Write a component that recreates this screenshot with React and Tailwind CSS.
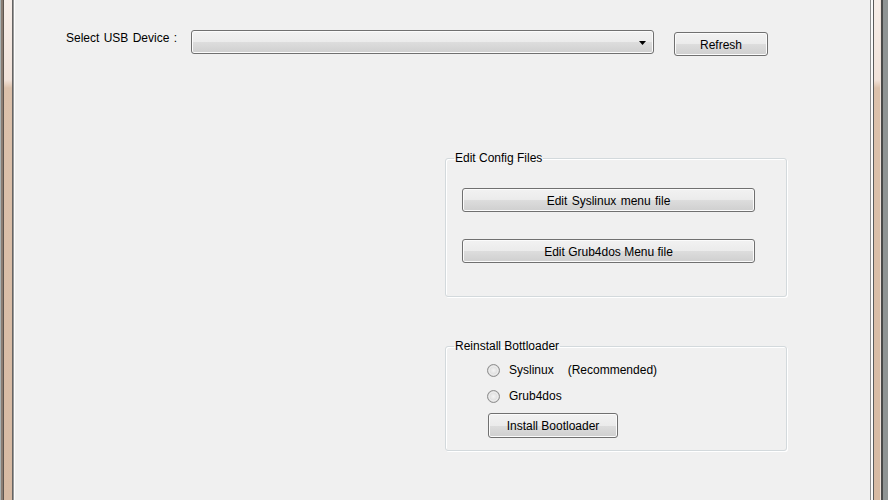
import React from "react";

const btn =
  "flex items-center justify-center rounded-[3px] border border-[#707070] bg-[linear-gradient(to_bottom,#f2f2f2_0%,#ebebeb_50%,#dddddd_50%,#cfcfcf_100%)] shadow-[inset_0_0_0_1px_#fbfbfb] text-black leading-none";

function Beige() {
  return (
    <div className="h-full bg-[linear-gradient(to_bottom,#f7eee9_0px,#f1e2d9_80px,#dcc1ab_88px,#d7baa3_500px)]" />
  );
}

function LeftFrame() {
  return (
    <div className="flex h-full w-[15px] shrink-0">
      <div className="w-[1px] bg-[#aab2b3]" />
      <div className="w-[2px] bg-[#8a7c72]" />
      <div className="w-[1px] bg-[#5e5650]" />
      <div className="w-[8px]">
        <Beige />
      </div>
      <div className="w-[1px] bg-[#646464]" />
      <div className="w-[1px] bg-[#9a9a9a]" />
      <div className="w-[1px] bg-[#fdfdfd]" />
    </div>
  );
}

function RightFrame() {
  return (
    <div className="flex h-full w-[18px] shrink-0">
      <div className="w-[1px] bg-[#8e8e8e]" />
      <div className="w-[2px] bg-[#fbfbfb]" />
      <div className="w-[1px] bg-[#5a5a5a]" />
      <div className="w-[6px]">
        <Beige />
      </div>
      <div className="w-[1px] bg-[#ece0d8]" />
      <div className="w-[2px] bg-[#4a4a4a]" />
      <div className="w-[5px] bg-[#8f9494]" />
    </div>
  );
}

function Radio() {
  return (
    <svg width="13" height="13" viewBox="0 0 13 13" className="shrink-0">
      <defs>
        <radialGradient id="rg" cx="50%" cy="50%" r="50%">
          <stop offset="0%" stopColor="#f4f4f4" />
          <stop offset="60%" stopColor="#e2e2e2" />
          <stop offset="100%" stopColor="#c9c9c9" />
        </radialGradient>
      </defs>
      <circle cx="6.5" cy="6.5" r="6" fill="url(#rg)" stroke="#8f8f8f" strokeWidth="1" />
      <circle cx="6.5" cy="6.5" r="4.5" fill="none" stroke="#f6f6f6" strokeWidth="0.8" />
    </svg>
  );
}

function Group({ title, className, children }) {
  return (
    <fieldset
      className={
        "w-[342px] rounded-[3px] border border-[#d3d9dc] shadow-[inset_1px_1px_0_#ffffff,1px_1px_0_#ffffff] " +
        className
      }
    >
      <legend className="ml-[8px] px-[1px] leading-[14px] text-black">{title}</legend>
      {children}
    </fieldset>
  );
}

export default function App() {
  return (
    <div className="flex h-[500px] w-[888px] overflow-hidden font-['Liberation_Sans',Arial,sans-serif] text-[12px] text-black">
      <LeftFrame />
      <div className="flex h-full flex-1 flex-col bg-[#f0f0f0]">
        <div className="flex items-start pt-[30px]">
          <div className="ml-[51px] mt-[1px] w-[125px] leading-[14px] [word-spacing:1px]">
            Select USB Device :
          </div>
          <div className={btn + " relative h-[24px] w-[463px] justify-end pr-[7px]"}>
            <svg width="7" height="4" viewBox="0 0 7 4" className="mt-[1px]">
              <path d="M0 0 H7 L3.5 4 Z" fill="#000" />
            </svg>
          </div>
          <div className={btn + " ml-[20px] mt-[2px] h-[24px] w-[94px] pt-[1px]"}>Refresh</div>
        </div>

        <div className="ml-[430px] mt-[95px] flex flex-col">
          <Group title="Edit Config Files" className="pb-[33px]">
            <div className="ml-[16px] mt-[23px] flex flex-col gap-[27px]">
              <div className={btn + " h-[24px] w-[293px] pt-[2px] [word-spacing:1px]"}>Edit Syslinux menu file</div>
              <div className={btn + " h-[24px] w-[293px] pt-[2px]"}>Edit Grub4dos Menu file</div>
            </div>
          </Group>

          <Group title="Reinstall Bottloader" className="mt-[42px] pb-[12px]">
            <div className="ml-[41px] mt-[9px] flex flex-col">
              <div className="flex h-[16px] items-center">
                <Radio />
                <span className="ml-[9px]">Syslinux</span>
                <span className="ml-[14px]">(Recommended)</span>
              </div>
              <div className="mt-[10px] flex h-[16px] items-center">
                <Radio />
                <span className="ml-[9px]">Grub4dos</span>
              </div>
              <div className={btn + " ml-[1px] mt-[9px] h-[25px] w-[130px] pt-[1px]"}>Install Bootloader</div>
            </div>
          </Group>
        </div>
      </div>
      <RightFrame />
    </div>
  );
}
